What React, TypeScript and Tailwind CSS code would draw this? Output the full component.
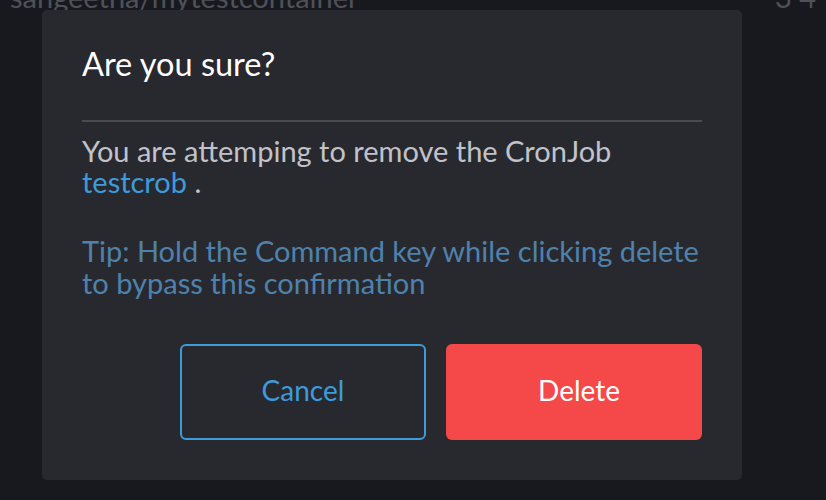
export default function App() {
  return (
    <div className="relative w-[826px] h-[500px] overflow-hidden bg-[#18191f] font-['Lato',sans-serif]">
      <div className="flex justify-between px-[10px] -mt-[18px] h-[28px] text-[29px] leading-[29px] text-[#4f5158]">
        <span>sangeetha/mytestcontainer</span>
        <span>3 4</span>
      </div>
      <div className="absolute left-[42px] top-[10px] w-[700px] h-[470px] rounded-[5px] bg-[#28292e] px-[40px] pt-[34px] pb-[40px] flex flex-col">
        <h2 className="text-[32.5px] leading-[40px] text-white font-normal">Are you sure?</h2>
        <div className="mt-[36px] h-[2px] bg-[#4a4b52]" />
        <p className="mt-[13px] text-[29px] leading-[31px] text-[#c1c2ca]">
          You are attemping to remove the CronJob <span className="text-[#3d9bdc]">testcrob</span> .
        </p>
        <p className="mt-[38px] text-[29px] leading-[32px] text-[#4e82ad]">
          Tip: Hold the Command key while clicking delete to bypass this confirmation
        </p>
        <div className="mt-auto flex justify-end gap-[20px]">
          <button className="w-[246px] h-[96px] pb-[4px] rounded-[6px] border-2 border-[#3d9bdc] text-[#3d9bdc] text-[28px]">Cancel</button>
          <button className="w-[256px] h-[96px] pb-[4px] pl-[10px] rounded-[6px] bg-[#f54848] text-white text-[28px]">Delete</button>
        </div>
      </div>
    </div>
  );
}
